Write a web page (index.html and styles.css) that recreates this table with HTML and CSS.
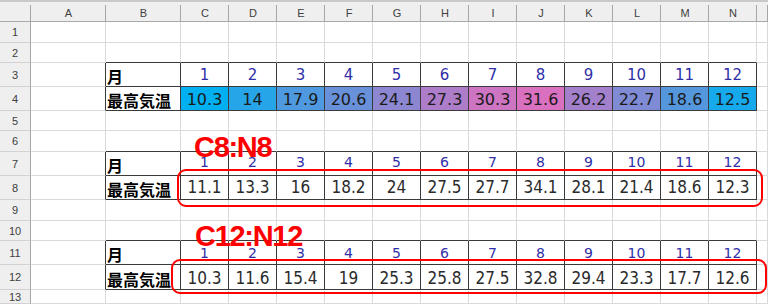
FILE: index.html
```html
<!DOCTYPE html>
<html lang="ja">
<head>
<meta charset="utf-8">
<title>最高気温</title>
<link rel="stylesheet" href="styles.css">
</head>
<body>
<div class="sheet">
  <div class="ch"></div><div class="ch">A</div><div class="ch">B</div><div class="ch">C</div><div class="ch">D</div><div class="ch">E</div><div class="ch">F</div><div class="ch">G</div><div class="ch">H</div><div class="ch">I</div><div class="ch">J</div><div class="ch">K</div><div class="ch">L</div><div class="ch">M</div><div class="ch">N</div><div class="ch"></div>

  <div class="rh">1</div><div class="c"></div><div class="c"></div><div class="c"></div><div class="c"></div><div class="c"></div><div class="c"></div><div class="c"></div><div class="c"></div><div class="c"></div><div class="c"></div><div class="c"></div><div class="c"></div><div class="c"></div><div class="c"></div><div class="c"></div>

  <div class="rh">2</div><div class="c"></div><div class="c above"></div><div class="c above"></div><div class="c above"></div><div class="c above"></div><div class="c above"></div><div class="c above"></div><div class="c above"></div><div class="c above"></div><div class="c above"></div><div class="c above"></div><div class="c above"></div><div class="c above"></div><div class="c above"></div><div class="c"></div>

  <div class="rh">3</div><div class="c left"></div><div class="c t lbl">月</div><div class="c t mon">1</div><div class="c t mon">2</div><div class="c t mon">3</div><div class="c t mon">4</div><div class="c t mon">5</div><div class="c t mon">6</div><div class="c t mon">7</div><div class="c t mon">8</div><div class="c t mon">9</div><div class="c t mon">10</div><div class="c t mon">11</div><div class="c t mon">12</div><div class="c"></div>

  <div class="rh">4</div><div class="c left"></div><div class="c t lbl">最高気温</div><div class="c t tmp" style="background:#00b0f0">10.3</div><div class="c t tmp" style="background:#26a5e8">14</div><div class="c t tmp" style="background:#4e99df">17.9</div><div class="c t tmp" style="background:#6991d9">20.6</div><div class="c t tmp" style="background:#8d87d1">24.1</div><div class="c t tmp" style="background:#ae7dca">27.3</div><div class="c t tmp" style="background:#cd74c3">30.3</div><div class="c t tmp" style="background:#da70c0">31.6</div><div class="c t tmp" style="background:#a380cc">26.2</div><div class="c t tmp" style="background:#7f8bd4">22.7</div><div class="c t tmp" style="background:#5597dd">18.6</div><div class="c t tmp" style="background:#16a9eb">12.5</div><div class="c"></div>

  <div class="rh">5</div><div class="c"></div><div class="c"></div><div class="c"></div><div class="c"></div><div class="c"></div><div class="c"></div><div class="c"></div><div class="c"></div><div class="c"></div><div class="c"></div><div class="c"></div><div class="c"></div><div class="c"></div><div class="c"></div><div class="c"></div>

  <div class="rh">6</div><div class="c"></div><div class="c above"></div><div class="c above"></div><div class="c above"></div><div class="c above"></div><div class="c above"></div><div class="c above"></div><div class="c above"></div><div class="c above"></div><div class="c above"></div><div class="c above"></div><div class="c above"></div><div class="c above"></div><div class="c above"></div><div class="c"></div>

  <div class="rh">7</div><div class="c left"></div><div class="c t lbl">月</div><div class="c t mon-7">1</div><div class="c t mon-7">2</div><div class="c t mon-7">3</div><div class="c t mon-7">4</div><div class="c t mon-7">5</div><div class="c t mon-7">6</div><div class="c t mon-7">7</div><div class="c t mon-7">8</div><div class="c t mon-7">9</div><div class="c t mon-7">10</div><div class="c t mon-7">11</div><div class="c t mon-7">12</div><div class="c"></div>

  <div class="rh">8</div><div class="c left"></div><div class="c t lbl">最高気温</div><div class="c t val">11.1</div><div class="c t val">13.3</div><div class="c t val">16</div><div class="c t val">18.2</div><div class="c t val">24</div><div class="c t val">27.5</div><div class="c t val">27.7</div><div class="c t val">34.1</div><div class="c t val">28.1</div><div class="c t val">21.4</div><div class="c t val">18.6</div><div class="c t val">12.3</div><div class="c"></div>

  <div class="rh">9</div><div class="c"></div><div class="c"></div><div class="c"></div><div class="c"></div><div class="c"></div><div class="c"></div><div class="c"></div><div class="c"></div><div class="c"></div><div class="c"></div><div class="c"></div><div class="c"></div><div class="c"></div><div class="c"></div><div class="c"></div>

  <div class="rh">10</div><div class="c"></div><div class="c above"></div><div class="c above"></div><div class="c above"></div><div class="c above"></div><div class="c above"></div><div class="c above"></div><div class="c above"></div><div class="c above"></div><div class="c above"></div><div class="c above"></div><div class="c above"></div><div class="c above"></div><div class="c above"></div><div class="c"></div>

  <div class="rh">11</div><div class="c left"></div><div class="c t lbl">月</div><div class="c t mon-11">1</div><div class="c t mon-11">2</div><div class="c t mon-11">3</div><div class="c t mon-11">4</div><div class="c t mon-11">5</div><div class="c t mon-11">6</div><div class="c t mon-11">7</div><div class="c t mon-11">8</div><div class="c t mon-11">9</div><div class="c t mon-11">10</div><div class="c t mon-11">11</div><div class="c t mon-11">12</div><div class="c"></div>

  <div class="rh">12</div><div class="c left"></div><div class="c t lbl">最高気温</div><div class="c t val val-12">10.3</div><div class="c t val val-12">11.6</div><div class="c t val val-12">15.4</div><div class="c t val val-12">19</div><div class="c t val val-12">25.3</div><div class="c t val val-12">25.8</div><div class="c t val val-12">27.5</div><div class="c t val val-12">32.8</div><div class="c t val val-12">29.4</div><div class="c t val val-12">23.3</div><div class="c t val val-12">17.7</div><div class="c t val val-12">12.6</div><div class="c"></div>

  <div class="rh">13</div><div class="c"></div><div class="c"></div><div class="c"></div><div class="c"></div><div class="c"></div><div class="c"></div><div class="c"></div><div class="c"></div><div class="c"></div><div class="c"></div><div class="c"></div><div class="c"></div><div class="c"></div><div class="c"></div><div class="c"></div>

  <div class="callout callout-8"></div>
  <div class="callout callout-12"></div>
  <div class="tag tag-8">C8:N8</div>
  <div class="tag tag-12">C12:N12</div>
</div>
</body>
</html>
```

FILE: styles.css
```css
html, body {
  margin: 0;
  padding: 0;
  background: #ffffff;
}

body {
  width: 768px;
  height: 304px;
  overflow: hidden;
}

.sheet {
  position: relative;
  display: grid;
  grid-template-columns: 31px 75px 75px repeat(12, 48px) 11px;
  grid-template-rows: 22px 21px 20px 24px 24px 20px 21px 24px 24px 21px 20px 24px 25px 14px;
  font-family: "DejaVu Sans", sans-serif;
}

.sheet > div {
  box-sizing: border-box;
}

/* column headers */
.ch {
  display: flex;
  align-items: center;
  justify-content: center;
  padding-top: 2px;
  border-top: 2px solid #c9c9c9;
  border-bottom: 1px solid #a9a9a9;
  background: linear-gradient(#a6a6a6, #a6a6a6) right 3px / 1px calc(100% - 3px) no-repeat, #efefef;
  font: 11px "Liberation Sans", sans-serif;
  color: #404040;
}

/* row headers */
.rh {
  display: flex;
  align-items: center;
  justify-content: center;
  background: #efefef;
  border-right: 1px solid #a6a6a6;
  border-bottom: 1px solid #d2d2d2;
  font: 11px "Liberation Sans", sans-serif;
  color: #404040;
}

/* cells */
.c {
  display: flex;
  align-items: flex-end;
  justify-content: center;
  border-right: 1px solid #dadada;
  border-bottom: 1px solid #dadada;
  line-height: 1;
  white-space: nowrap;
}

.t {
  border-right-color: #3a3a3a;
  border-bottom-color: #3a3a3a;
}

.above {
  border-bottom-color: #3a3a3a;
}

.left {
  border-right-color: #3a3a3a;
}

.lbl {
  justify-content: flex-start;
  padding-left: 1px;
  padding-bottom: 2px;
  font: 700 16px/1 "Noto Sans CJK JP", sans-serif;
  color: #000000;
}

.mon {
  font-size: 15px;
  color: #2f2fa8;
  padding-bottom: 3px;
}

.tmp {
  font-size: 16px;
  color: #1a1a1a;
  padding-bottom: 2px;
}

.mon-7 {
  font-size: 14px;
  color: #2f2fa8;
  padding-bottom: 6px;
}

.mon-11 {
  font-size: 14px;
  color: #2f2fa8;
  padding-bottom: 4px;
}

.val {
  font-family: "DejaVu Sans Condensed", "DejaVu Sans", sans-serif;
  font-stretch: condensed;
  font-size: 17px;
  color: #2a2a2a;
  padding-bottom: 3px;
}

.val-12 {
  padding-bottom: 2px;
}

/* red annotations over the sheet */
.callout {
  position: absolute;
  border: 2px solid #ff0000;
  border-radius: 9px;
}

.callout-8 {
  left: 177px;
  top: 169px;
  width: 586px;
  height: 38px;
}

.callout-12 {
  left: 171px;
  top: 259px;
  width: 596px;
  height: 35px;
}

.tag {
  position: absolute;
  font: 700 29px/1 "Liberation Sans", sans-serif;
  letter-spacing: -1.3px;
  color: #ff0000;
  white-space: nowrap;
}

.tag-8 {
  left: 194px;
  top: 133px;
}

.tag-12 {
  left: 195px;
  top: 222px;
}
```
